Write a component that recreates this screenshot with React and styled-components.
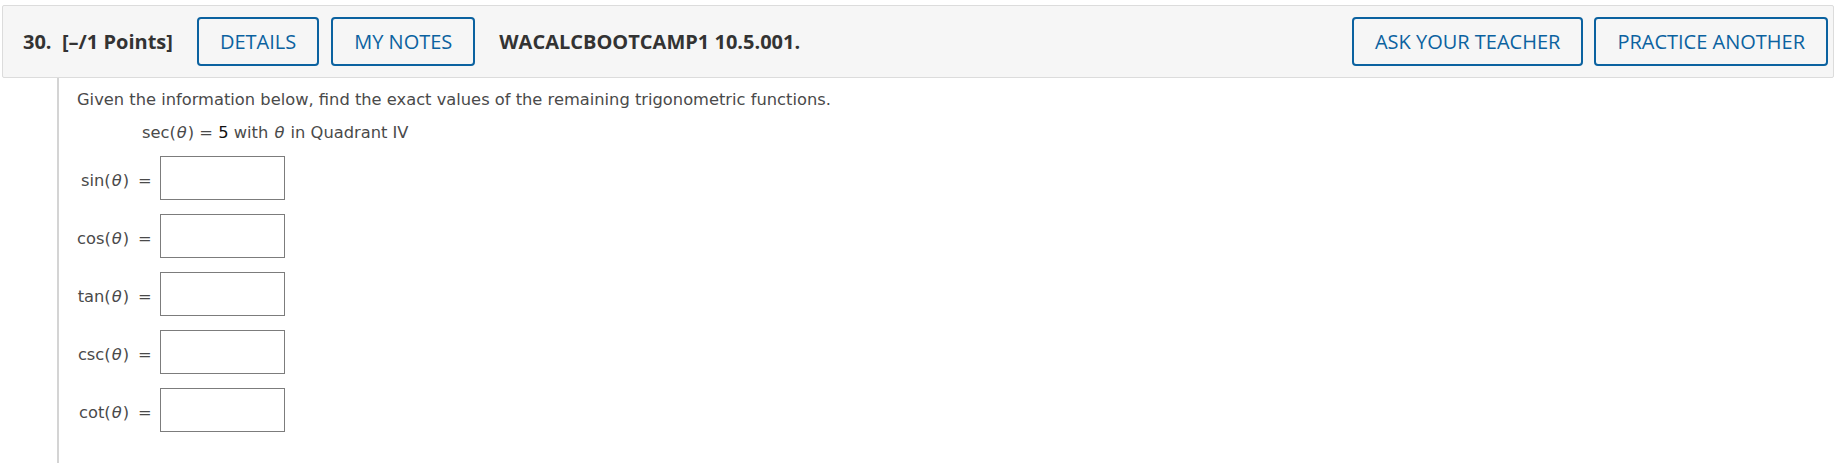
import React from "react";
import styled, { createGlobalStyle } from "styled-components";

const GlobalStyle = createGlobalStyle`
  html, body {
    margin: 0;
    padding: 0;
    background: #fff;
  }
  body {
    font-family: "Open Sans", "Liberation Sans", sans-serif;
  }
`;

const Page = styled.div`
  width: 1834px;
  height: 465px;
  overflow: hidden;
  padding: 5px 0 0 2px;
  box-sizing: border-box;
`;

const Header = styled.div`
  display: flex;
  align-items: center;
  height: 73px;
  box-sizing: border-box;
  background: #f6f6f6;
  border: 1px solid #dcdcdc;
  border-radius: 2px;
  padding: 0 5px 0 20px;
  font-family: "Open Sans", sans-serif;
`;

const Title = styled.div`
  font-size: 20px;
  font-weight: 700;
  color: #333;
  margin-right: 24px;
  white-space: pre;
`;

const Code = styled.div`
  font-size: 20px;
  font-weight: 700;
  color: #333;
  margin-left: 24px;
`;

const Spacer = styled.div`
  flex: 1;
`;

const HeadButton = styled.button`
  height: 49px;
  padding: 0 21px;
  margin-left: ${(p) => p.gap || 0}px;
  background: transparent;
  border: 2px solid #0b62a0;
  border-radius: 4px;
  color: #0b62a0;
  font-family: "Open Sans", sans-serif;
  font-size: 20px;
  font-weight: 500;
  cursor: pointer;
`;

const Body = styled.div`
  margin-left: 55px;
  border-left: 2px solid #d4d4d4;
  padding: 10px 0 0 18px;
  height: 385px;
  box-sizing: border-box;
  font-family: "DejaVu Sans", Verdana, sans-serif;
  font-size: 16.3px;
  color: #4a4a4a;
`;

const Line = styled.div`
  line-height: 24px;
  margin-left: ${(p) => p.indent || 0}px;
  margin-bottom: ${(p) => p.after || 0}px;
`;

const Theta = styled.i`
  font-style: italic;
  margin: 0 1px;
`;

const Strong = styled.span`
  color: #111;
`;

const Rows = styled.div`
  display: flex;
  flex-direction: column;
  gap: 14px;
`;

const Row = styled.div`
  display: flex;
  align-items: center;
`;

const Label = styled.span`
  width: 52px;
  text-align: right;
  padding-top: 5px;
  white-space: nowrap;
`;

const Equals = styled.span`
  margin: 0 8px 0 9px;
  padding-top: 5px;
`;

const Answer = styled.input`
  width: 125px;
  height: 44px;
  box-sizing: border-box;
  border: 1px solid #7c7c7c;
  background: #fff;
  outline: none;
  margin: 0;
`;

const functions = ["sin", "cos", "tan", "csc", "cot"];

const App = () => {
  return (
    <Page>
      <GlobalStyle />
      <Header>
        <Title>30.  [–/1 Points]</Title>
        <HeadButton>DETAILS</HeadButton>
        <HeadButton gap={12}>MY NOTES</HeadButton>
        <Code>WACALCBOOTCAMP1 10.5.001.</Code>
        <Spacer />
        <HeadButton>ASK YOUR TEACHER</HeadButton>
        <HeadButton gap={11}>PRACTICE ANOTHER</HeadButton>
      </Header>
      <Body>
        <Line after={9}>
          Given the information below, find the exact values of the remaining
          trigonometric functions.
        </Line>
        <Line indent={65} after={11}>
          sec(<Theta>θ</Theta>) = <Strong>5</Strong> with <Theta>θ</Theta> in
          Quadrant IV
        </Line>
        <Rows>
          {functions.map((fn) => (
            <Row key={fn}>
              <Label>
                {fn}(<Theta>θ</Theta>)
              </Label>
              <Equals>=</Equals>
              <Answer type="text" />
            </Row>
          ))}
        </Rows>
      </Body>
    </Page>
  );
};

export default App;
